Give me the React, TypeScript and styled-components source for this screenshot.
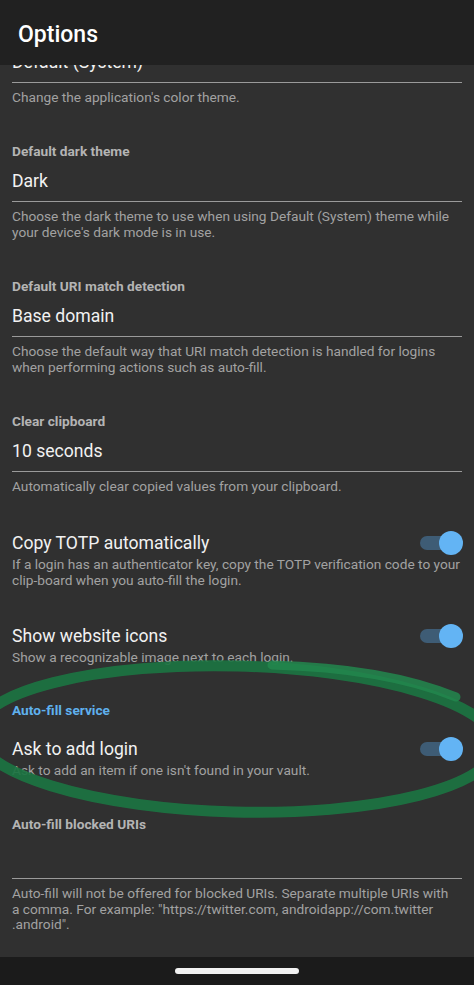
import styled, { createGlobalStyle } from 'styled-components';

const GlobalStyle = createGlobalStyle`
  html, body {
    margin: 0;
    padding: 0;
    background: #303030;
  }
  body {
    font-family: Roboto, "Noto Sans", "Liberation Sans", sans-serif;
    -webkit-font-smoothing: antialiased;
  }
  * {
    box-sizing: border-box;
  }
`;

const Screen = styled.div`
  position: relative;
  width: 474px;
  height: 985px;
  display: flex;
  flex-direction: column;
  overflow: hidden;
  background: #303030;
`;

const AppBar = styled.header`
  height: 65px;
  flex-shrink: 0;
  display: flex;
  align-items: center;
  padding: 3px 18px 0;
  background: #212121;
  position: relative;
  z-index: 1;
`;

const Title = styled.h1`
  margin: 0;
  font-size: 23px;
  font-weight: 500;
  color: #ffffff;
`;

const Scroller = styled.main`
  flex: 1;
  overflow: hidden;
`;

// list is scrolled so that the first setting sits half under the app bar
const Content = styled.div`
  display: flex;
  flex-direction: column;
  padding: 0 12px;
  margin-top: -41.5px;
`;

const Block = styled.section<{ $gap: number }>`
  margin-top: ${(p) => p.$gap}px;
  display: flex;
  flex-direction: column;
`;

const Label = styled.div<{ $accent?: boolean }>`
  min-height: 16px;
  font-size: 13.7px;
  font-weight: 700;
  line-height: 16px;
  color: ${(p) => (p.$accent ? '#5fb1ee' : '#b4b4b4')};
`;

const Value = styled.div<{ $tall?: boolean }>`
  margin-top: 10px;
  min-height: ${(p) => (p.$tall ? 37 : 33)}px;
  padding-bottom: 8px;
  font-size: 17.6px;
  line-height: 24px;
  color: #f2f2f2;
  border-bottom: 1px solid #9a9a9a;
`;

const Help = styled.p<{ $top?: number }>`
  margin: ${(p) => p.$top ?? 7}px 0 0;
  font-size: 13.7px;
  line-height: 15.5px;
  color: #a2a2a2;
`;

const SwitchRow = styled.div`
  display: flex;
  align-items: center;
  justify-content: space-between;
  height: 24px;
`;

const SwitchTitle = styled.div`
  font-size: 17.6px;
  line-height: 24px;
  color: #f2f2f2;
`;

const Toggle = styled.div`
  position: relative;
  width: 43px;
  height: 24px;
  margin-right: -1px;
  display: flex;
  align-items: center;
`;

const Track = styled.div`
  width: 35px;
  height: 14px;
  border-radius: 7px;
  background: #3e5c75;
`;

const Thumb = styled.div`
  position: absolute;
  right: 0;
  top: 0;
  width: 24px;
  height: 24px;
  border-radius: 50%;
  background: #63b4f4;
`;

const NavBar = styled.footer`
  height: 28px;
  flex-shrink: 0;
  display: flex;
  align-items: center;
  justify-content: center;
  background: #1b1b1b;
`;

const HomePill = styled.div`
  width: 124px;
  height: 6px;
  border-radius: 3px;
  background: #f2f2f2;
`;

const Annotation = styled.svg`
  position: absolute;
  top: 0;
  left: 0;
  pointer-events: none;
  z-index: 2;
`;

type DropdownProps = {
  gap: number;
  label: string;
  value: string;
  help: string;
  tall?: boolean;
};

const DropdownSetting = ({ gap, label, value, help, tall }: DropdownProps) => (
  <Block $gap={gap}>
    <Label>{label}</Label>
    <Value $tall={tall}>{value}</Value>
    <Help>{help}</Help>
  </Block>
);

type SwitchProps = {
  gap: number;
  title: string;
  help: string;
};

const SwitchSetting = ({ gap, title, help }: SwitchProps) => (
  <Block $gap={gap}>
    <SwitchRow>
      <SwitchTitle>{title}</SwitchTitle>
      <Toggle>
        <Track />
        <Thumb />
      </Toggle>
    </SwitchRow>
    <Help $top={2}>{help}</Help>
  </Block>
);

export default function App() {
  return (
    <>
      <GlobalStyle />
      <Screen>
        <AppBar>
          <Title>Options</Title>
        </AppBar>
        <Scroller>
          <Content>
            <DropdownSetting
              gap={0}
              label=""
              value="Default (System)"
              help="Change the application's color theme."
            />
            <DropdownSetting
              gap={38}
              label="Default dark theme"
              value="Dark"
              help="Choose the dark theme to use when using Default (System) theme while your device's dark mode is in use."
            />
            <DropdownSetting
              gap={38}
              label="Default URI match detection"
              value="Base domain"
              help="Choose the default way that URI match detection is handled for logins when performing actions such as auto-fill."
            />
            <DropdownSetting
              gap={38}
              label="Clear clipboard"
              value="10 seconds"
              help="Automatically clear copied values from your clipboard."
            />
            <SwitchSetting
              gap={36.5}
              title="Copy TOTP automatically"
              help="If a login has an authenticator key, copy the TOTP verification code to your clip-board when you auto-fill the login."
            />
            <SwitchSetting
              gap={36}
              title="Show website icons"
              help="Show a recognizable image next to each login."
            />
            <Block $gap={36.5}>
              <Label $accent>Auto-fill service</Label>
            </Block>
            <SwitchSetting
              gap={19}
              title="Ask to add login"
              help="Ask to add an item if one isn't found in your vault."
            />
            <DropdownSetting
              gap={37.5}
              label="Auto-fill blocked URIs"
              value=""
              tall
              help={'Auto-fill will not be offered for blocked URIs. Separate multiple URIs with a\u00a0comma. For example: "https://twitter.com, androidapp://com.twitter .android".'}
            />
          </Content>
        </Scroller>
        <NavBar>
          <HomePill />
        </NavBar>
        <Annotation width="474" height="985" viewBox="0 0 474 985">
          <ellipse
            cx="236"
            cy="739"
            rx="260"
            ry="73"
            transform="rotate(1.5 236 739)"
            fill="none"
            stroke="#1c7442"
            strokeWidth="11"
            opacity="0.92"
          />
          <path
            d="M272 665 Q385 668 456 697"
            fill="none"
            stroke="#22874d"
            strokeWidth="9"
            strokeLinecap="round"
            opacity="0.85"
          />
        </Annotation>
      </Screen>
    </>
  );
}
